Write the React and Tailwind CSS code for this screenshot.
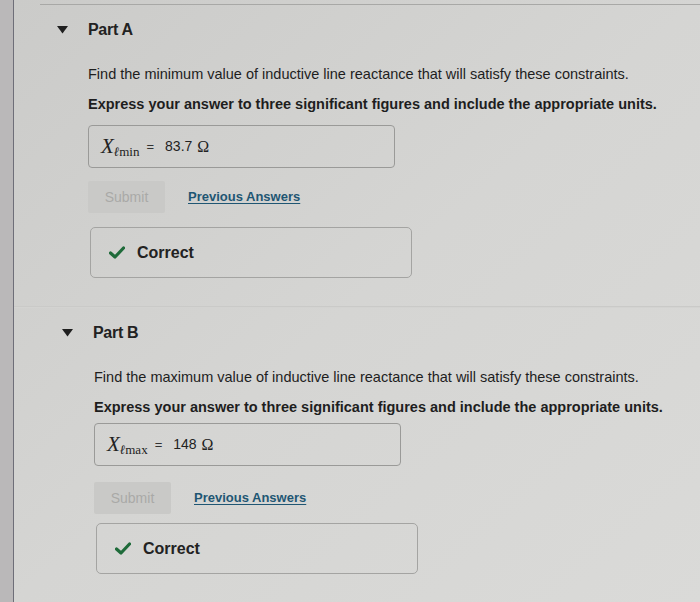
import React from "react";

const font = { fontFamily: '"Liberation Sans", Arial, sans-serif' };
const serif = { fontFamily: '"Liberation Serif", "Times New Roman", serif' };

function Tri() {
  return (
    <svg width="11" height="8" viewBox="0 0 11 8" className="shrink-0">
      <path d="M0 0 L11 0 L5.5 7.5 Z" fill="#1f1f1f" />
    </svg>
  );
}

function Check() {
  return (
    <svg width="16" height="13" viewBox="0 0 16 13">
      <path d="M1.5 7 L6 11 L14.5 2" fill="none" stroke="#1f6b3a" strokeWidth="3.2" strokeLinecap="round" strokeLinejoin="round" />
    </svg>
  );
}

function Part({ label, sub, value, padL, headerPad, inputGap, submitGap, correctGap }) {
  return (
    <div>
      <div className={`flex items-center h-[50px] ${headerPad}`}>
        <Tri />
        <span className="ml-[20px] text-[16px] font-bold text-[#222] tracking-[-0.3px]">{label}</span>
      </div>
      <div className={`${padL} pt-[12px]`}>
        <p className="text-[14.5px] text-[#1e1e1e] leading-none">
          Find the {sub === "max" ? "maximum" : "minimum"} value of inductive line reactance that will satisfy these constraints.
        </p>
        <p className="mt-[15px] text-[14.5px] font-bold text-[#1e1e1e] leading-none">
          Express your answer to three significant figures and include the appropriate units.
        </p>
        <div className={`${inputGap} w-[307px] h-[43px] border border-[#9a9a98] rounded-[4px] flex items-center pl-[12px]`}>
          <span className="text-[21px] italic text-[#222] leading-none" style={serif}>X</span>
          <span className="text-[13px] text-[#222] mt-[9px] leading-none" style={serif}>
            <i>ℓ</i>{sub}
          </span>
          <span className="text-[13px] text-[#333] ml-[7px]">=</span>
          <span className="text-[14px] text-[#222] ml-[11px]">{value}</span>
          <span className="text-[16px] text-[#222] ml-[5px]" style={serif}>Ω</span>
        </div>
        <div className={`${submitGap} flex items-center`}>
          <div className="w-[77px] h-[32px] bg-[#c9c9c7] rounded-[2px] flex items-center justify-center text-[14px] text-[#a9a9a7]">Submit</div>
          <span className="ml-[23px] text-[13px] font-bold text-[#1f5673] underline underline-offset-2">Previous Answers</span>
        </div>
        <div className={`${correctGap} ml-[2px] w-[322px] h-[51px] border border-[#a4a4a2] rounded-[5px] flex items-center pl-[18px]`}>
          <Check />
          <span className="ml-[12px] text-[16px] font-bold text-[#222]">Correct</span>
        </div>
      </div>
    </div>
  );
}

export default function App() {
  return (
    <div className="w-[700px] h-[602px] overflow-hidden flex bg-[#c6c5c5]" style={font}>
      <div className="w-[14px] shrink-0 border-r border-[#6e6e78] bg-[#bab8b9]" />
      <div className="flex-1 bg-linear-to-br from-[#cbcbc9] via-[#d5d5d3] to-[#dadad8]">
        <div className="h-[5px] ml-[26px] border-b border-[#a8a8a6]" />
        <Part label="Part A" sub="min" value="83.7" padL="pl-[74px]" headerPad="pl-[43px]" inputGap="mt-[14px]" submitGap="mt-[13px]" correctGap="mt-[14px]" />
        <div className="h-[28px]" />
        <div className="bg-[#d3d3d1] border-t border-[#cacac8] h-[2px]" />
        <Part label="Part B" sub="max" value="148" padL="pl-[80px]" headerPad="pl-[48px]" inputGap="mt-[9px]" submitGap="mt-[16px]" correctGap="mt-[9px]" />
      </div>
    </div>
  );
}
